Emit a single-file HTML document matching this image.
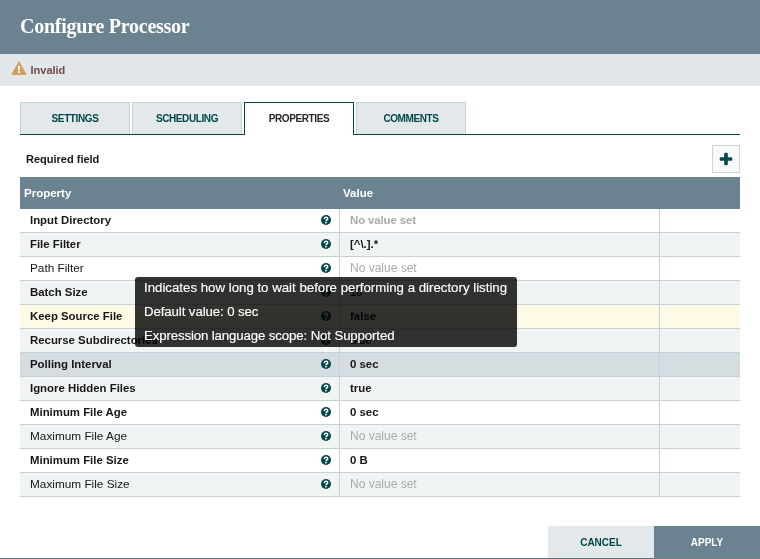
<!DOCTYPE html>
<html><head><meta charset="utf-8">
<style>
*{margin:0;padding:0;box-sizing:border-box}
html,body{width:760px;height:559px;overflow:hidden;background:#fff;font-family:"Liberation Sans",sans-serif;color:#161616}
.abs{position:absolute}
.t{position:absolute;white-space:nowrap;line-height:1}
#hdr{left:0;top:0;width:760px;height:54px;background:#6b8390}
#title{left:20px;top:16px;font-family:"Liberation Serif",serif;font-weight:bold;font-size:20px;letter-spacing:-0.25px;color:#fff}
#status{left:0;top:54px;width:760px;height:32px;background:#e2e7ea}
#invalid{left:30.5px;top:65px;font-weight:bold;font-size:11px;color:#6e4a49}
.tab{position:absolute;top:102px;height:32px;width:110px;background:#e3e8eb;border:1px solid #c3d4d4;border-bottom:none;color:#004849;font-weight:bold;font-size:10px;letter-spacing:-0.4px;text-align:center;line-height:31px}
.tab.sel{background:#fff;border-color:#004849;color:#262626;height:33px;z-index:2}
#tabline{left:20px;top:134px;width:720px;height:1px;background:#004849}
#req{left:26px;top:154px;font-weight:bold;font-size:11px;color:#161616}
#plus{left:712px;top:145px;width:28px;height:28px;border:1px solid #c9d6d9;background:#f7f9fa}
#thead{left:20px;top:177px;width:720px;height:32px;background:#6b8390}
.th{position:absolute;top:187.6px;color:#fff;font-weight:bold;font-size:11.5px;line-height:1}
.row{position:absolute;left:20px;width:720px;height:24px;border-bottom:1px solid #c6d1d6}
.row.odd{background:#f1f4f5}
.row.hov{background:#fffae6}
.row.selr{background:#d6dde1}
.vl{position:absolute;top:209px;width:1px;height:288px;background:#c6d1d6}
.name{position:absolute;left:10px;top:5.9px;font-size:11.8px;line-height:1;white-space:nowrap}
.name.b{top:6px}
.b{font-weight:bold;font-size:11.4px}
.val.b{font-size:11.4px;top:5.8px}
.val.b.unset{letter-spacing:-0.1px}
.val{position:absolute;left:330px;top:5px;font-size:12px;line-height:1;white-space:nowrap}
.unset{color:#aaa}
.help{position:absolute;left:301px;top:6px;width:10px;height:10px}
#tip{left:135px;top:277px;width:382px;height:70px;background:rgba(0,0,0,0.8);border-radius:3px;z-index:5}
.tl{position:absolute;left:9px;color:#fff;font-size:13.25px;-webkit-text-stroke:0.15px #fff;line-height:1;white-space:nowrap}
#tiptri{left:322.5px;top:347px;width:0;height:0;border-left:3.5px solid transparent;border-right:3.5px solid transparent;border-top:6px solid #fff;z-index:5}
.btn{position:absolute;top:526px;height:33px;width:106px;font-weight:bold;font-size:10px;text-align:center;line-height:33px}
#cancel{left:548px;background:#e3e8eb;color:#004849}
#apply{left:654px;background:#6b8390;color:#fff}
#bline{left:0;top:558px;width:760px;height:1px;background:linear-gradient(to right,#637077 0,#637077 654px,#7b8388 654px)}
</style></head><body><div id="wrap" style="position:absolute;left:0;top:0;width:760px;height:559px;will-change:transform">
<div id="hdr" class="abs"></div>
<div id="title" class="t">Configure Processor</div>
<div id="status" class="abs"></div>
<svg class="abs" style="left:11px;top:61px" width="16" height="15" viewBox="0 0 16 15"><path d="M8 1.3 L14.4 13.2 L1.6 13.2 Z" fill="#cf9f5d" stroke="#cf9f5d" stroke-width="1.6" stroke-linejoin="round"/><rect x="7" y="4.8" width="2" height="4.4" fill="#fff"/><rect x="7" y="10.2" width="2" height="1.9" fill="#fff"/></svg>
<div id="invalid" class="t">Invalid</div>

<div class="tab" style="left:20px">SETTINGS</div>
<div class="tab" style="left:132px">SCHEDULING</div>
<div class="tab sel" style="left:244px">PROPERTIES</div>
<div class="tab" style="left:356px">COMMENTS</div>
<div id="tabline" class="abs"></div>

<div id="req" class="t">Required field</div>
<div id="plus" class="abs"><svg class="abs" style="left:6px;top:6.2px" width="14" height="14" viewBox="0 0 14 14"><rect x="5.2" y="0.7" width="3.6" height="12.6" rx="1.3" fill="#004849"/><rect x="0.7" y="5.2" width="12.6" height="3.6" rx="1.3" fill="#004849"/></svg></div>

<div id="thead" class="abs"></div>
<div class="th" style="left:24px">Property</div>
<div class="th" style="left:343px">Value</div>

<div id="rows">
<div class="row" style="top:209px"><div class="name b">Input Directory</div><svg class="help" viewBox="0 0 10 10"><circle cx="5" cy="5" r="5" fill="#004849"/><path d="M3.3 3.9 Q3.3 2.2 5 2.2 Q6.7 2.2 6.7 3.7 Q6.7 4.6 5.8 5 Q5 5.4 5 6.2" fill="none" stroke="#fff" stroke-width="1.55"/><rect x="4.2" y="6.9" width="1.6" height="1.5" fill="#fff"/></svg><div class="val b unset">No value set</div></div>
<div class="row odd" style="top:233px"><div class="name b">File Filter</div><svg class="help" viewBox="0 0 10 10"><circle cx="5" cy="5" r="5" fill="#004849"/><path d="M3.3 3.9 Q3.3 2.2 5 2.2 Q6.7 2.2 6.7 3.7 Q6.7 4.6 5.8 5 Q5 5.4 5 6.2" fill="none" stroke="#fff" stroke-width="1.55"/><rect x="4.2" y="6.9" width="1.6" height="1.5" fill="#fff"/></svg><div class="val b">[^\.].*</div></div>
<div class="row" style="top:257px"><div class="name">Path Filter</div><svg class="help" viewBox="0 0 10 10"><circle cx="5" cy="5" r="5" fill="#004849"/><path d="M3.3 3.9 Q3.3 2.2 5 2.2 Q6.7 2.2 6.7 3.7 Q6.7 4.6 5.8 5 Q5 5.4 5 6.2" fill="none" stroke="#fff" stroke-width="1.55"/><rect x="4.2" y="6.9" width="1.6" height="1.5" fill="#fff"/></svg><div class="val unset">No value set</div></div>
<div class="row odd" style="top:281px"><div class="name b">Batch Size</div><svg class="help" viewBox="0 0 10 10"><circle cx="5" cy="5" r="5" fill="#004849"/><path d="M3.3 3.9 Q3.3 2.2 5 2.2 Q6.7 2.2 6.7 3.7 Q6.7 4.6 5.8 5 Q5 5.4 5 6.2" fill="none" stroke="#fff" stroke-width="1.55"/><rect x="4.2" y="6.9" width="1.6" height="1.5" fill="#fff"/></svg><div class="val b">10</div></div>
<div class="row hov" style="top:305px"><div class="name b">Keep Source File</div><svg class="help" viewBox="0 0 10 10"><circle cx="5" cy="5" r="5" fill="#004849"/><path d="M3.3 3.9 Q3.3 2.2 5 2.2 Q6.7 2.2 6.7 3.7 Q6.7 4.6 5.8 5 Q5 5.4 5 6.2" fill="none" stroke="#fff" stroke-width="1.55"/><rect x="4.2" y="6.9" width="1.6" height="1.5" fill="#fff"/></svg><div class="val b">false</div></div>
<div class="row odd" style="top:329px"><div class="name b">Recurse Subdirectories</div><svg class="help" viewBox="0 0 10 10"><circle cx="5" cy="5" r="5" fill="#004849"/><path d="M3.3 3.9 Q3.3 2.2 5 2.2 Q6.7 2.2 6.7 3.7 Q6.7 4.6 5.8 5 Q5 5.4 5 6.2" fill="none" stroke="#fff" stroke-width="1.55"/><rect x="4.2" y="6.9" width="1.6" height="1.5" fill="#fff"/></svg><div class="val b">true</div></div>
<div class="row selr" style="top:353px"><div class="name b">Polling Interval</div><svg class="help" viewBox="0 0 10 10"><circle cx="5" cy="5" r="5" fill="#004849"/><path d="M3.3 3.9 Q3.3 2.2 5 2.2 Q6.7 2.2 6.7 3.7 Q6.7 4.6 5.8 5 Q5 5.4 5 6.2" fill="none" stroke="#fff" stroke-width="1.55"/><rect x="4.2" y="6.9" width="1.6" height="1.5" fill="#fff"/></svg><div class="val b">0 sec</div></div>
<div class="row odd" style="top:377px"><div class="name b">Ignore Hidden Files</div><svg class="help" viewBox="0 0 10 10"><circle cx="5" cy="5" r="5" fill="#004849"/><path d="M3.3 3.9 Q3.3 2.2 5 2.2 Q6.7 2.2 6.7 3.7 Q6.7 4.6 5.8 5 Q5 5.4 5 6.2" fill="none" stroke="#fff" stroke-width="1.55"/><rect x="4.2" y="6.9" width="1.6" height="1.5" fill="#fff"/></svg><div class="val b">true</div></div>
<div class="row" style="top:401px"><div class="name b">Minimum File Age</div><svg class="help" viewBox="0 0 10 10"><circle cx="5" cy="5" r="5" fill="#004849"/><path d="M3.3 3.9 Q3.3 2.2 5 2.2 Q6.7 2.2 6.7 3.7 Q6.7 4.6 5.8 5 Q5 5.4 5 6.2" fill="none" stroke="#fff" stroke-width="1.55"/><rect x="4.2" y="6.9" width="1.6" height="1.5" fill="#fff"/></svg><div class="val b">0 sec</div></div>
<div class="row odd" style="top:425px"><div class="name">Maximum File Age</div><svg class="help" viewBox="0 0 10 10"><circle cx="5" cy="5" r="5" fill="#004849"/><path d="M3.3 3.9 Q3.3 2.2 5 2.2 Q6.7 2.2 6.7 3.7 Q6.7 4.6 5.8 5 Q5 5.4 5 6.2" fill="none" stroke="#fff" stroke-width="1.55"/><rect x="4.2" y="6.9" width="1.6" height="1.5" fill="#fff"/></svg><div class="val unset">No value set</div></div>
<div class="row" style="top:449px"><div class="name b">Minimum File Size</div><svg class="help" viewBox="0 0 10 10"><circle cx="5" cy="5" r="5" fill="#004849"/><path d="M3.3 3.9 Q3.3 2.2 5 2.2 Q6.7 2.2 6.7 3.7 Q6.7 4.6 5.8 5 Q5 5.4 5 6.2" fill="none" stroke="#fff" stroke-width="1.55"/><rect x="4.2" y="6.9" width="1.6" height="1.5" fill="#fff"/></svg><div class="val b">0 B</div></div>
<div class="row odd" style="top:473px"><div class="name">Maximum File Size</div><svg class="help" viewBox="0 0 10 10"><circle cx="5" cy="5" r="5" fill="#004849"/><path d="M3.3 3.9 Q3.3 2.2 5 2.2 Q6.7 2.2 6.7 3.7 Q6.7 4.6 5.8 5 Q5 5.4 5 6.2" fill="none" stroke="#fff" stroke-width="1.55"/><rect x="4.2" y="6.9" width="1.6" height="1.5" fill="#fff"/></svg><div class="val unset">No value set</div></div>
<div class="vl" style="left:339px"></div><div class="vl" style="left:659px"></div>
<div id="tip" class="abs"><div class="tl" style="top:4px">Indicates how long to wait before performing a directory listing</div><div class="tl" style="top:28px;letter-spacing:-0.1px">Default value: 0 sec</div><div class="tl" style="top:52px;letter-spacing:-0.13px">Expression language scope: Not Supported</div></div>
<div id="tiptri" class="abs"></div>
<div id="cancel" class="btn">CANCEL</div>
<div id="apply" class="btn">APPLY</div>
<div id="bline" class="abs"></div>
</div>
</div></body></html>
